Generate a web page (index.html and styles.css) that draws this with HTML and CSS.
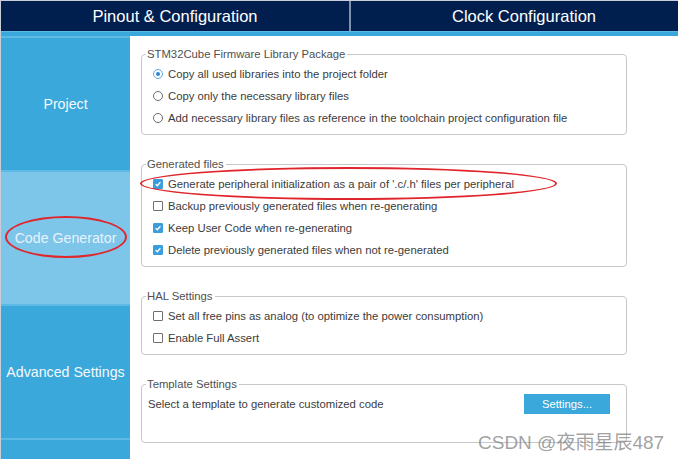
FILE: index.html
```html
<!DOCTYPE html>
<html>
<head>
<meta charset="utf-8">
<link rel="stylesheet" href="styles.css">
</head>
<body>
<div class="app">
  <header class="tabs">
    <div class="tab tab-pinout">Pinout &amp; Configuration</div>
    <div class="tab tab-clock">Clock Configuration</div>
  </header>
  <div class="strip"></div>
  <div class="main">
    <nav class="sidebar">
      <div class="nav-item">Project</div>
      <div class="nav-item active">Code Generator<span class="mark mark-nav"></span></div>
      <div class="nav-item">Advanced Settings</div>
      <div class="nav-item"></div>
    </nav>
    <section class="content">
      <fieldset class="group">
        <legend>STM32Cube Firmware Library Package</legend>
        <div class="row"><span class="radio on"></span>Copy all used libraries into the project folder</div>
        <div class="row"><span class="radio"></span>Copy only the necessary library files</div>
        <div class="row"><span class="radio"></span>Add necessary library files as reference in the toolchain project configuration file</div>
      </fieldset>
      <fieldset class="group">
        <legend>Generated files</legend>
        <div class="row"><span class="check on"><svg viewBox="0 0 10 10"><path d="M2 5.1 L4.1 7.2 L8 2.8"/></svg></span>Generate peripheral initialization as a pair of '.c/.h' files per peripheral<span class="mark mark-row"></span></div>
        <div class="row"><span class="check"></span>Backup previously generated files when re-generating</div>
        <div class="row"><span class="check on"><svg viewBox="0 0 10 10"><path d="M2 5.1 L4.1 7.2 L8 2.8"/></svg></span>Keep User Code when re-generating</div>
        <div class="row"><span class="check on"><svg viewBox="0 0 10 10"><path d="M2 5.1 L4.1 7.2 L8 2.8"/></svg></span>Delete previously generated files when not re-generated</div>
      </fieldset>
      <fieldset class="group">
        <legend>HAL Settings</legend>
        <div class="row"><span class="check"></span>Set all free pins as analog (to optimize the power consumption)</div>
        <div class="row"><span class="check"></span>Enable Full Assert</div>
      </fieldset>
      <fieldset class="group group-template">
        <legend>Template Settings</legend>
        <div class="row row-template"><span>Select a template to generate customized code</span><button class="btn">Settings...</button></div>
      </fieldset>
    </section>
  </div>
  <div class="watermark">CSDN @夜雨星辰487</div>
</div>
</body>
</html>
```

FILE: styles.css
```css
* { box-sizing: border-box; }
html, body { margin: 0; padding: 0; background: #fff; }
body { font-family: "Liberation Sans", Arial, sans-serif; }

.app {
  position: relative;
  width: 678px;
  height: 459px;
  overflow: hidden;
  border-top: 1px solid #c9ced8;
  border-left: 1px solid #c9ced8;
  background: #fff;
}

.tabs {
  display: flex;
  height: 30px;
  background: #011f4e;
}
.tab {
  flex-shrink: 0;
  display: flex;
  align-items: center;
  justify-content: center;
  color: #fff;
  font-size: 16.5px;
}
.tab-pinout { width: 348px; }
.tab-clock {
  width: 348px;
  border-left: 2px solid #8292ad;
}

.strip {
  height: 5px;
  background: #3aa8db;
  border-top: 1px solid #5cb8e4;
}

.main {
  display: flex;
  height: 423px;
}

.sidebar {
  width: 129px;
  flex-shrink: 0;
  background: #3aa8db;
  display: flex;
  flex-direction: column;
}
.nav-item {
  position: relative;
  flex-shrink: 0;
  height: 134px;
  border-top: 2px solid #5fb9e5;
  display: flex;
  align-items: center;
  justify-content: center;
  color: #f4f9fd;
  font-size: 14.2px;
}
.nav-item.active {
  background: #7ec5ea;
  color: #e6f3fb;
}

.mark {
  position: absolute;
  border: 2px solid #e0262c;
  border-radius: 50%;
  pointer-events: none;
}
.mark-nav {
  left: 4px;
  top: 44px;
  width: 122px;
  height: 42px;
}
.mark-row {
  left: -2px;
  top: -6px;
  width: 417px;
  height: 33px;
}

.content {
  flex: 1;
  padding: 11px 0 0 11px;
}

.group {
  width: 486px;
  margin: 0 0 22px 0;
  padding: 2px 0 5px 0;
  border: 1px solid #c6c8cb;
  border-radius: 4px;
  min-width: 0;
}
.group legend {
  margin-left: 4px;
  padding: 0 2px 0 1px;
  font-size: 11.3px;
  line-height: 14px;
  color: #505050;
}
.group-template { padding-bottom: 27px; }

.row {
  position: relative;
  display: flex;
  align-items: center;
  gap: 5px;
  height: 22px;
  padding-left: 11px;
  font-size: 11.3px;
  color: #3c3c3c;
  white-space: nowrap;
}
.row-template {
  justify-content: space-between;
  padding-left: 6px;
  padding-right: 16px;
}

.radio {
  width: 10px;
  height: 10px;
  border: 1px solid #6e6e6e;
  border-radius: 50%;
  background: #fff;
  display: flex;
  align-items: center;
  justify-content: center;
  flex-shrink: 0;
}
.radio.on { border-color: #5aaee0; }
.radio.on::after {
  content: "";
  width: 4px;
  height: 4px;
  border-radius: 50%;
  background: #2c86d2;
}

.check {
  width: 10px;
  height: 10px;
  border: 1px solid #707070;
  border-radius: 1px;
  background: #fff;
  flex-shrink: 0;
  display: flex;
}
.check.on {
  background: #3b9edb;
  border-color: #3b9edb;
}
.check svg { width: 8px; height: 8px; }
.check path {
  fill: none;
  stroke: #fff;
  stroke-width: 1.6;
}

.btn {
  width: 86px;
  height: 20px;
  border: none;
  background: #3aa8db;
  color: #fff;
  font-family: "Liberation Sans", Arial, sans-serif;
  font-size: 11.3px;
  padding: 0;
}

.watermark {
  position: absolute;
  left: 477px;
  top: 426px;
  font-family: "Liberation Sans", "Noto Sans CJK SC", sans-serif;
  font-size: 19px;
  color: rgba(120, 120, 120, 0.7);
  white-space: nowrap;
}
```
